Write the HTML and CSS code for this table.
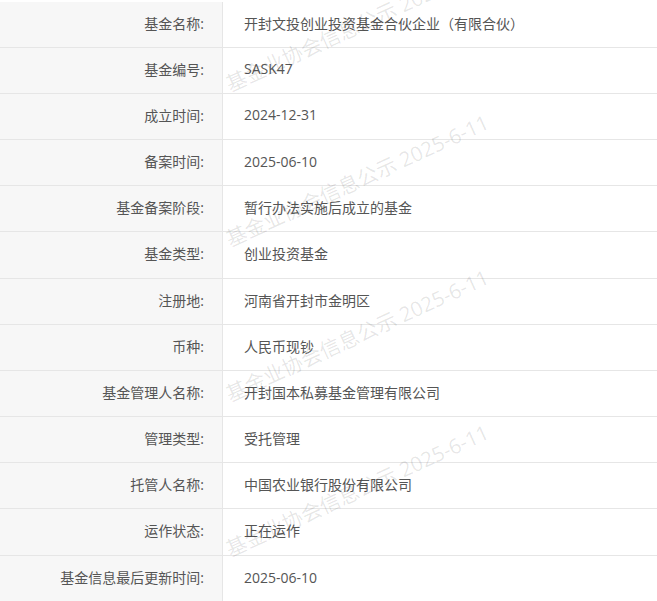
FILE: index.html
```html
<!DOCTYPE html>
<html lang="zh-CN">
<head>
    <meta charset="UTF-8">
    <meta name="viewport" content="width=device-width, initial-scale=1.0">
    <title>基金信息</title>
    <link rel="stylesheet" href="styles.css">
</head>
<body>
    <div class="page">
        <div class="info-table">
            <div class="row"><div class="label">基金名称:</div><div class="value">开封文投创业投资基金合伙企业（有限合伙）</div></div>
            <div class="row"><div class="label">基金编号:</div><div class="value">SASK47</div></div>
            <div class="row"><div class="label">成立时间:</div><div class="value">2024-12-31</div></div>
            <div class="row"><div class="label">备案时间:</div><div class="value">2025-06-10</div></div>
            <div class="row"><div class="label">基金备案阶段:</div><div class="value">暂行办法实施后成立的基金</div></div>
            <div class="row"><div class="label">基金类型:</div><div class="value">创业投资基金</div></div>
            <div class="row"><div class="label">注册地:</div><div class="value">河南省开封市金明区</div></div>
            <div class="row"><div class="label">币种:</div><div class="value">人民币现钞</div></div>
            <div class="row"><div class="label">基金管理人名称:</div><div class="value">开封国本私募基金管理有限公司</div></div>
            <div class="row"><div class="label">管理类型:</div><div class="value">受托管理</div></div>
            <div class="row"><div class="label">托管人名称:</div><div class="value">中国农业银行股份有限公司</div></div>
            <div class="row"><div class="label">运作状态:</div><div class="value">正在运作</div></div>
            <div class="row"><div class="label">基金信息最后更新时间:</div><div class="value">2025-06-10</div></div>
        </div>

        <!-- watermark lies over the table -->
        <div class="watermark">
            <div class="wm-line"><span>基金业协会信息公示 2025-6-11</span></div>
            <div class="wm-line"><span>基金业协会信息公示 2025-6-11</span></div>
            <div class="wm-line"><span>基金业协会信息公示 2025-6-11</span></div>
            <div class="wm-line"><span>基金业协会信息公示 2025-6-11</span></div>
        </div>
    </div>
</body>
</html>
```

FILE: styles.css
```css
body {
    margin: 0;
    padding: 0;
    background-color: #FFFFFF;
    color: #555555;
    font-family: 'Open Sans', 'Noto Sans CJK SC', sans-serif;
    font-size: 14px;
}
.page {
    position: relative;
    height: 601px;
    overflow: hidden;
}
.info-table {
    padding-top: 1.5px;
}
.row {
    box-sizing: border-box;
    display: grid;
    grid-template-columns: 223px 1fr;
    height: 46.18px;
    border-bottom: 1px solid #E6E6E6;
}
.row:last-child {
    border-bottom: none;
}
.label {
    box-sizing: border-box;
    display: flex;
    align-items: center;
    justify-content: flex-end;
    padding-right: 18px;
    padding-bottom: 3px;
    background-color: #F7F7F7;
    border-right: 1px solid #E6E6E6;
}
.value {
    display: flex;
    align-items: center;
    padding-left: 21px;
    padding-bottom: 3px;
}
.watermark {
    position: absolute;
    top: -61px;
    left: 0;
    right: 0;
    pointer-events: none;
}
.wm-line {
    height: 155px;
    display: flex;
    align-items: flex-end;
    padding-left: 231px;
}
.wm-line span {
    display: inline-block;
    font-size: 20.6px;
    line-height: 20px;
    color: rgba(0, 0, 0, 0.1);
    white-space: nowrap;
    transform: rotate(-24.6deg);
    transform-origin: 0 100%;
}
```
